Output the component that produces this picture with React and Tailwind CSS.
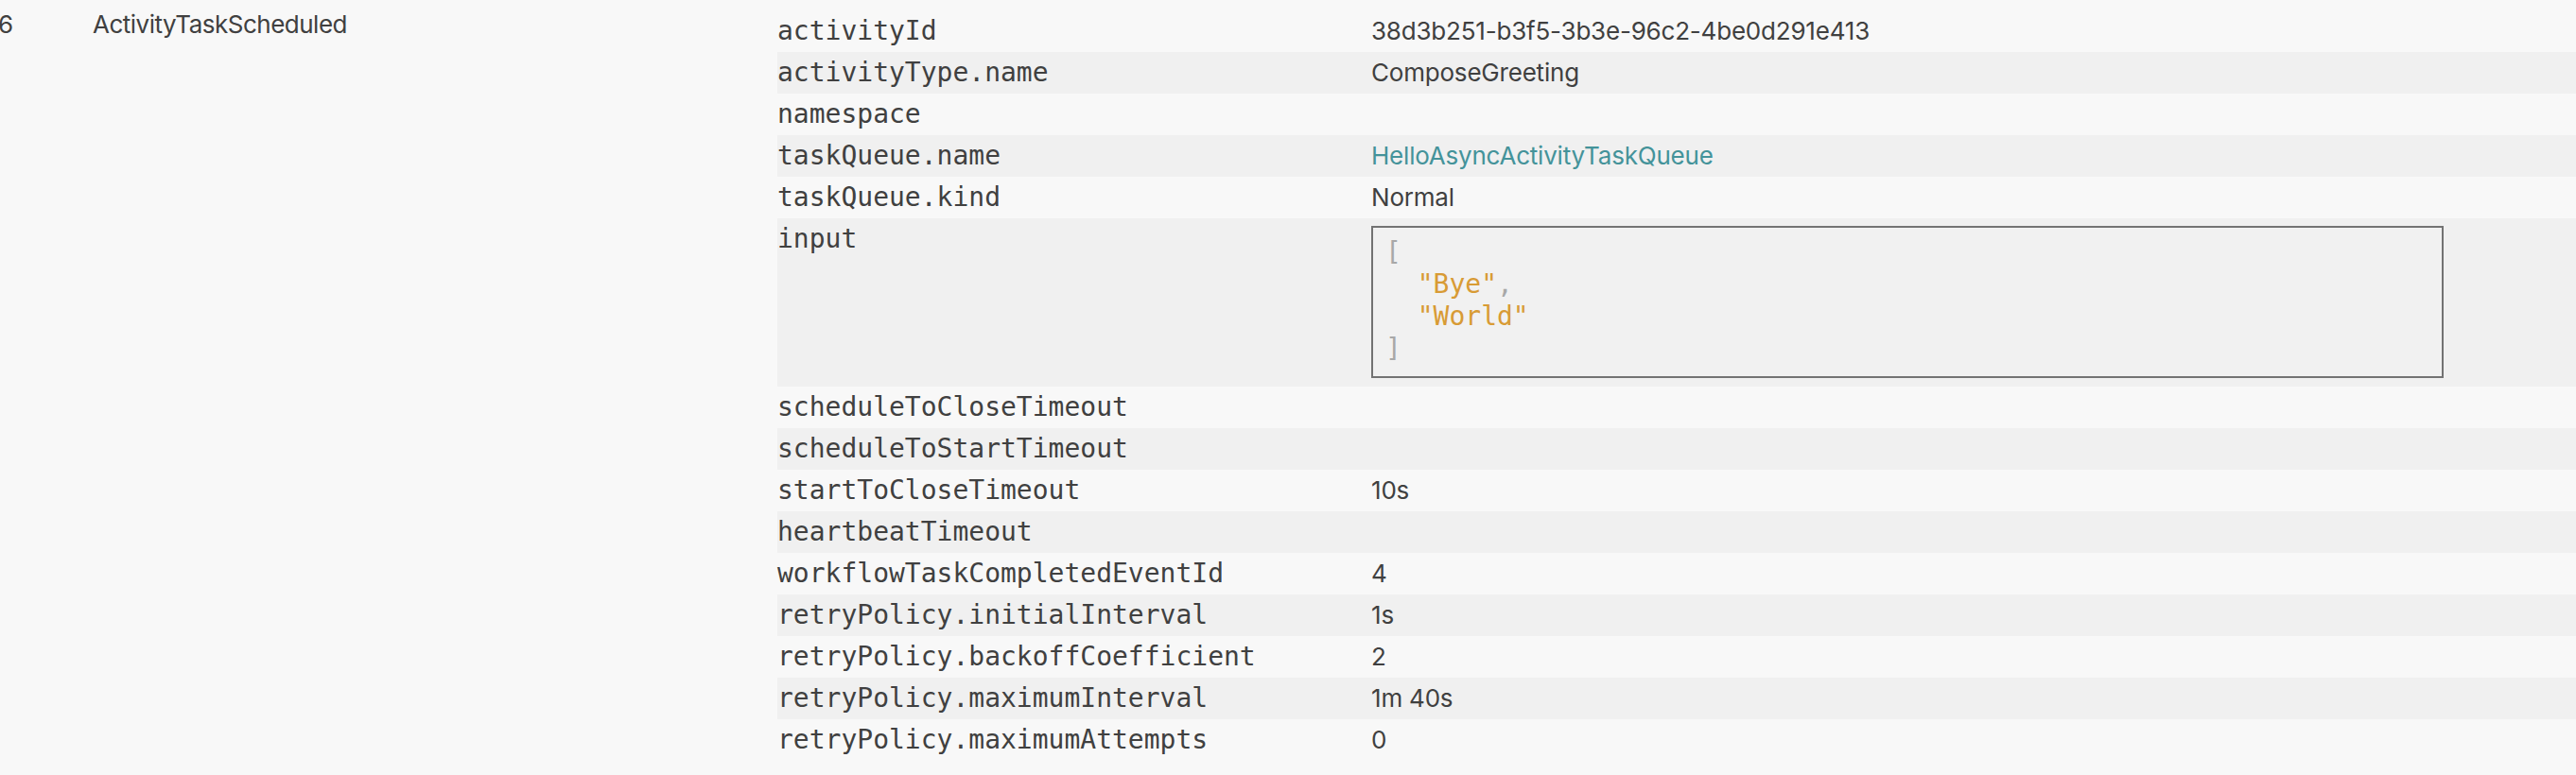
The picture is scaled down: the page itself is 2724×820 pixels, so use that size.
const rows = [
  { key: 'activityId', value: '38d3b251-b3f5-3b3e-96c2-4be0d291e413' },
  { key: 'activityType.name', value: 'ComposeGreeting' },
  { key: 'namespace', value: '' },
  { key: 'taskQueue.name', value: 'HelloAsyncActivityTaskQueue', link: true },
  { key: 'taskQueue.kind', value: 'Normal' },
  { key: 'input', code: true },
  { key: 'scheduleToCloseTimeout', value: '' },
  { key: 'scheduleToStartTimeout', value: '' },
  { key: 'startToCloseTimeout', value: '10s' },
  { key: 'heartbeatTimeout', value: '' },
  { key: 'workflowTaskCompletedEventId', value: '4' },
  { key: 'retryPolicy.initialInterval', value: '1s' },
  { key: 'retryPolicy.backoffCoefficient', value: '2' },
  { key: 'retryPolicy.maximumInterval', value: '1m 40s' },
  { key: 'retryPolicy.maximumAttempts', value: '0' },
];

function CodeBlock() {
  return (
    <div className="w-[1134px] mt-[8px] mb-[9px] border-2 border-[#737373] bg-[#f1f1f1] pl-[13px] pt-[9px] pb-[12px] font-['DejaVu_Sans_Mono',monospace] text-[28px] leading-[34px] whitespace-pre">
      <div className="text-[#a8a8a8]">[</div>
      <div>
        {'  '}<span className="text-[#d89b35]">"Bye"</span><span className="text-[#a8a8a8]">,</span>
      </div>
      <div>
        {'  '}<span className="text-[#d89b35]">"World"</span>
      </div>
      <div className="text-[#a8a8a8]">]</div>
    </div>
  );
}

export default function App() {
  return (
    <div className="min-h-[820px] w-[2724px] bg-[#f8f8f8] flex text-[#404040]">
      <div className="w-[822px] shrink-0 flex pt-[8px] font-['Inter',sans-serif] text-[26px] leading-[36px] tracking-[-0.5px]">
        <div className="w-[100px] -ml-[2px]">6</div>
        <div>ActivityTaskScheduled</div>
      </div>

      <div className="flex-1 pt-[11px]">
        {rows.map((row, i) => (
          <div key={row.key} className={i % 2 === 1 ? 'flex bg-[#f0f0f0]' : 'flex'}>
            <div className="w-[628px] shrink-0 font-['DejaVu_Sans_Mono',monospace] text-[28px] leading-[44px]">
              {row.key}
            </div>
            <div className="flex-1">
              {row.code ? (
                <CodeBlock />
              ) : (
                <div className={row.link ? "font-['Inter',sans-serif] text-[26px] leading-[44px] tracking-[-0.2px] text-[#44939a]" : "font-['Inter',sans-serif] text-[26px] leading-[44px] tracking-[-0.2px]"}>
                  {row.value}
                </div>
              )}
            </div>
          </div>
        ))}
      </div>
    </div>
  );
}
